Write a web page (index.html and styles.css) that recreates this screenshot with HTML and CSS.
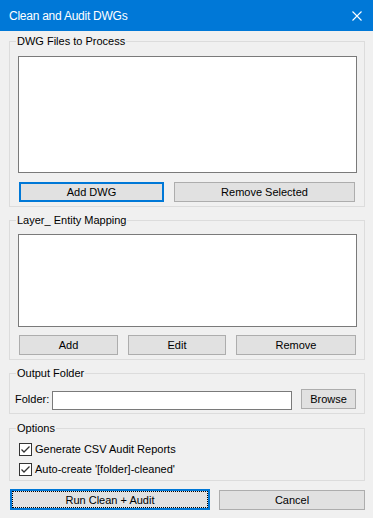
FILE: index.html
```html
<!DOCTYPE html>
<html lang="en">
<head>
<meta charset="utf-8">
<title>Clean and Audit DWGs</title>
<link rel="stylesheet" href="styles.css">
</head>
<body>
<div class="window">
  <div class="titlebar">
    <span class="title">Clean and Audit DWGs</span>
    <svg class="close" width="10" height="10" viewBox="0 0 10 10"><path d="M0.5 0.5 L9.5 9.5 M9.5 0.5 L0.5 9.5" stroke="#fff" stroke-width="1.1" fill="none"/></svg>
  </div>
  <div class="client">
    <fieldset class="group files">
      <legend>DWG Files to Process</legend>
      <div class="listbox"></div>
      <div class="btnrow">
        <button class="btn focus">Add DWG</button>
        <button class="btn">Remove Selected</button>
      </div>
    </fieldset>
    <fieldset class="group mapping">
      <legend>Layer_ Entity Mapping</legend>
      <div class="listbox"></div>
      <div class="btnrow">
        <button class="btn">Add</button>
        <button class="btn">Edit</button>
        <button class="btn">Remove</button>
      </div>
    </fieldset>
    <fieldset class="group output">
      <legend>Output Folder</legend>
      <div class="folderrow">
        <span class="folderlabel">Folder:</span>
        <div class="textbox"></div>
        <button class="btn browse">Browse</button>
      </div>
    </fieldset>
    <fieldset class="group options">
      <legend>Options</legend>
      <div class="check">
        <svg class="cb" width="13" height="13" viewBox="0 0 13 13"><rect x="0.5" y="0.5" width="12" height="12" fill="#fff" stroke="#333"/><path d="M2.5 6.5 L5 9 L10.5 3.5" stroke="#333" stroke-width="1.3" fill="none"/></svg>
        <span>Generate CSV Audit Reports</span>
      </div>
      <div class="check">
        <svg class="cb" width="13" height="13" viewBox="0 0 13 13"><rect x="0.5" y="0.5" width="12" height="12" fill="#fff" stroke="#333"/><path d="M2.5 6.5 L5 9 L10.5 3.5" stroke="#333" stroke-width="1.3" fill="none"/></svg>
        <span>Auto-create '[folder]-cleaned'</span>
      </div>
    </fieldset>
    <div class="footer">
      <button class="btn focus default">Run Clean + Audit</button>
      <button class="btn cancel">Cancel</button>
    </div>
  </div>
</div>
</body>
</html>
```

FILE: styles.css
```css
* { box-sizing: border-box; }
html, body { margin: 0; padding: 0; }
body {
  width: 373px;
  height: 518px;
  overflow: hidden;
  background: #f0f0f0;
  font-family: "Liberation Sans", Arial, sans-serif;
  font-size: 11px;
  color: #000;
}
.window {
  width: 373px;
  height: 518px;
  display: flex;
  flex-direction: column;
  background: #f0f0f0;
}
.titlebar {
  height: 31px;
  flex: none;
  background: #0078d7;
  color: #fff;
  display: flex;
  align-items: center;
  justify-content: space-between;
  padding: 0 11px 0 9px;
}
.title {
  font-size: 12px;
  letter-spacing: -0.25px;
}
.close { display: block; }
.client {
  padding: 4px 8px 0 9px;
  display: flex;
  flex-direction: column;
}
.group {
  margin: 0;
  border: 1px solid #dcdcdc;
  padding: 0 7px 4px 8px;
  min-width: 0;
}
.group legend {
  padding: 0 1px;
  margin-left: -2px;
  line-height: 13px;
  font-size: 11px;
}
.mapping, .output { margin-top: 7px; }
.options { margin-top: 8px; }
.listbox {
  background: #fff;
  border: 1px solid #7a7a7a;
}
.files .listbox { margin-top: 8px; height: 117px; }
.mapping .listbox { margin-top: 7px; height: 93px; }
.btnrow {
  display: grid;
  gap: 10px;
  padding-left: 1px;
  align-items: start;
}
.files .btnrow { margin-top: 9px; grid-template-columns: 145px 181px; }
.mapping .btnrow { margin-top: 8px; grid-template-columns: 99px 98px 120px; }
.btn {
  margin: 0;
  padding: 0;
  height: 20px;
  background: #e1e1e1;
  border: 1px solid #adadad;
  font-family: "Liberation Sans", Arial, sans-serif;
  font-size: 11px;
  color: #000;
  text-align: center;
  line-height: 16px;
}
.btn.focus {
  border: 2px solid #0078d7;
}
.output { padding-bottom: 3px; }
.folderrow {
  margin-top: 9px;
  margin-left: -3px;
  display: flex;
  align-items: flex-start;
}
.folderlabel {
  width: 37px;
  flex: none;
  margin-top: 4px;
  line-height: 13px;
}
.textbox {
  width: 240px;
  flex: none;
  margin-top: 2px;
  height: 19px;
  background: #fff;
  border: 1px solid #7a7a7a;
}
.btn.browse {
  width: 55px;
  flex: none;
  margin-left: 9px;
}
.check {
  display: flex;
  align-items: center;
  height: 13px;
  padding-left: 1px;
  line-height: 13px;
}
.check + .check { margin-top: 7px; }
.options .check:first-of-type { margin-top: 8px; }
.cb { display: block; flex: none; margin-right: 3px; }
.footer {
  margin-top: 8px;
  padding-left: 1px;
  display: grid;
  grid-template-columns: 200px 146px;
  column-gap: 9px;
  align-items: start;
}
.btn.default {
  height: 21px;
  outline: 1px dotted #000;
  outline-offset: -3px;
}
.btn.cancel { margin-top: 1px; }
```
